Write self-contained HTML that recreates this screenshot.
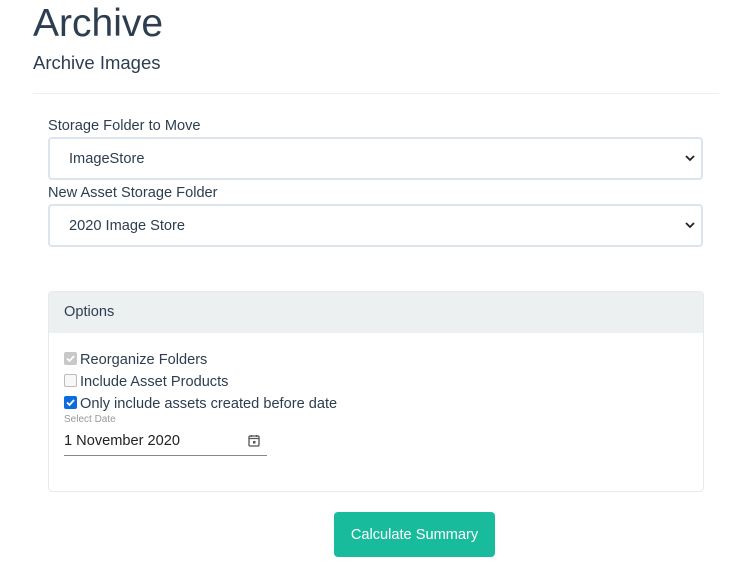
<!DOCTYPE html>
<html><head><style>
*{box-sizing:border-box;margin:0;padding:0}
body{width:739px;height:573px;background:#fff;font-family:"Liberation Sans",sans-serif;color:#2c3e50;position:relative;overflow:hidden}
.a{position:absolute;white-space:nowrap}
.sel{position:absolute;left:48px;width:655px;height:43px;border:2px solid #dce4ec;border-radius:4px;font-size:14.6px;padding:12px 0 0 19px;color:#2c3e50}
.chev{position:absolute;right:6px;top:15px}
.cb{position:absolute;left:64px;width:13px;height:13px;border-radius:2px}
.lbl{position:absolute;left:80px;font-size:14.6px}
</style></head><body>
<div class="a" style="left:33px;top:2px;font-size:39px;line-height:44px">Archive</div>
<div class="a" style="left:33px;top:51px;font-size:18.5px;line-height:24px">Archive Images</div>
<div class="a" style="left:33px;top:93px;width:686px;height:1px;background:#eceeef"></div>
<div class="a" style="left:48px;top:118px;font-size:14.6px">Storage Folder to Move</div>
<div class="sel" style="top:137px">ImageStore<svg class="chev" width="10" height="8" viewBox="0 0 10 8"><path d="M1 2l4 4 4-4" stroke="#222" stroke-width="1.8" fill="none"/></svg></div>
<div class="a" style="left:48px;top:185px;font-size:14.6px">New Asset Storage Folder</div>
<div class="sel" style="top:204px">2020 Image Store<svg class="chev" width="10" height="8" viewBox="0 0 10 8"><path d="M1 2l4 4 4-4" stroke="#222" stroke-width="1.8" fill="none"/></svg></div>
<div class="a" style="left:48px;top:291px;width:656px;height:201px;border:1px solid #e8eaeb;border-radius:4px;overflow:hidden">
<div style="height:41px;background:#ecf0f1;font-size:14.6px;padding:12px 0 0 15px">Options</div></div>
<div class="cb" style="top:352px;background:#c8c8c8"><svg width="13" height="13" viewBox="0 0 13 13"><path d="M3 6.5l2.5 2.5 4.5-5" stroke="#fff" stroke-width="1.8" fill="none"/></svg></div>
<div class="lbl" style="top:352px">Reorganize Folders</div>
<div class="cb" style="top:374px;border:1px solid #bbb;background:#f8f8f8"></div>
<div class="lbl" style="top:374px">Include Asset Products</div>
<div class="cb" style="top:396px;background:#0b6cde"><svg width="13" height="13" viewBox="0 0 13 13"><path d="M3 6.5l2.5 2.5 4.5-5" stroke="#fff" stroke-width="1.8" fill="none"/></svg></div>
<div class="lbl" style="top:396px">Only include assets created before date</div>
<div class="a" style="left:64px;top:414px;font-size:10px;color:#999">Select Date</div>
<div class="a" style="left:64px;top:433px;font-size:14.6px;color:#222">1 November 2020</div>
<svg class="a" style="left:248px;top:434px" width="12" height="13" viewBox="0 0 12 13"><rect x="1" y="2" width="10" height="10" rx="1" fill="none" stroke="#555" stroke-width="1.3"/><path d="M1 4.5h10M3.5 1v2M8.5 1v2" stroke="#555" stroke-width="1.3"/><rect x="5" y="7" width="2.5" height="2.5" fill="#555"/></svg>
<div class="a" style="left:64px;top:455px;width:203px;height:1px;background:#888"></div>
<div class="a" style="left:334px;top:512px;width:161px;height:45px;background:#18bc9c;border-radius:4px;color:#fff;font-size:14.6px;text-align:center;line-height:46px">Calculate Summary</div>
</body></html>
